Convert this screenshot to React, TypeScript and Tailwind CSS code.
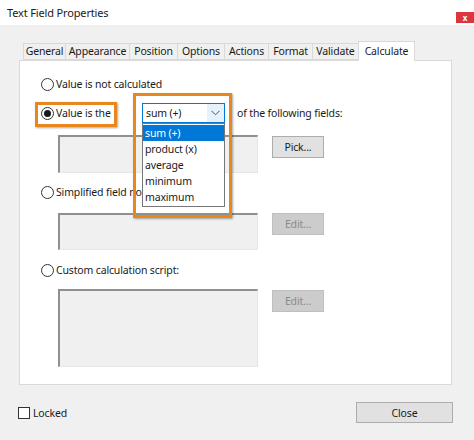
const tabs = [
  { label: "General", w: "w-[43px]" },
  { label: "Appearance", w: "w-[65px]" },
  { label: "Position", w: "w-[49px]" },
  { label: "Options", w: "w-[48px]" },
  { label: "Actions", w: "w-[45px]" },
  { label: "Format", w: "w-[45px]" },
  { label: "Validate", w: "w-[47px]" },
];

const options = ["sum (+)", "product (x)", "average", "minimum", "maximum"];

function Radio({ checked = false }: { checked?: boolean }) {
  return (
    <span className="w-[13px] h-[13px] rounded-full border border-[#333333] bg-white flex items-center justify-center shrink-0">
      {checked && <span className="w-[7px] h-[7px] rounded-full bg-[#1a1a1a]" />}
    </span>
  );
}

function Field({ h }: { h: string }) {
  return (
    <div
      className={`w-[200px] ${h} bg-[#f0f0f0] border-t-2 border-l-2 border-t-[#8f8f8f] border-l-[#8f8f8f] border-r border-b border-r-[#e6e6e6] border-b-[#e6e6e6]`}
    />
  );
}

function Btn({ label, disabled = false }: { label: string; disabled?: boolean }) {
  return (
    <div
      className={
        disabled
          ? "w-[52px] h-[22px] bg-[#cccccc] border border-[#bfbfbf] text-[#8a8a8a] flex items-center justify-center"
          : "w-[52px] h-[22px] bg-[#e1e1e1] border border-[#adadad] text-[#1a1a1a] flex items-center justify-center"
      }
    >
      {label}
    </div>
  );
}

export default function App() {
  return (
    <div
      className="relative w-[474px] h-[440px] bg-[#f0f0f0] overflow-hidden text-[10.5px] leading-[14px] tracking-[-0.15px] text-[#1a1a1a]"
      style={{ fontFamily: '"Noto Sans", "Open Sans", sans-serif' }}
    >
      {/* Title bar */}
      <div className="h-[25px] bg-white flex items-center pl-[7px] text-[11px]">
        Text Field Properties
      </div>
      <div className="absolute right-0 top-[12px] w-[18px] h-[11px] bg-[#d9363e] text-white text-[8px] leading-none flex items-center justify-center font-bold">
        x
      </div>

      {/* Tabs */}
      <div className="mt-[16px] ml-[23px] flex items-end h-[19px]">
        {tabs.map((t) => (
          <div
            key={t.label}
            className={`${t.w} h-[17px] bg-[#f0f0f0] border border-[#d9d9d9] -ml-px first:ml-0 flex items-center justify-center leading-none`}
          >
            {t.label}
          </div>
        ))}
        <div className="w-[57px] h-[20px] -mb-px bg-white border border-b-0 border-[#d9d9d9] -ml-px flex items-center justify-center leading-none relative z-10">
          Calculate
        </div>
      </div>

      {/* Panel */}
      <div className="ml-[19px] w-[433px] h-[325px] bg-white border border-[#d9d9d9] pl-[21px] pt-[13px] flex flex-col">
        <div className="h-[20px] flex items-center gap-[2px]">
          <Radio />
          <span>Value is not calculated</span>
        </div>

        <div className="mt-[9px] h-[20px] flex items-center">
          <div className="w-[101px] flex items-center gap-[2px]">
            <Radio checked />
            <span>Value is the</span>
          </div>
          <div className="w-[83px] h-[20px] border border-[#0078d7] bg-white flex items-center justify-between">
            <span className="pl-[3px]">sum (+)</span>
            <span className="w-[17px] h-full bg-[#e5f1fb] flex items-center justify-center">
              <svg width="9" height="6" viewBox="0 0 9 6" fill="none">
                <path d="M0.5 0.8 L4.5 4.8 L8.5 0.8" stroke="#555" strokeWidth="1" />
              </svg>
            </span>
          </div>
          <span className="ml-[12px]">of the following fields:</span>
        </div>

        <div className="mt-[12px] ml-[17px] flex items-start gap-[14px]">
          <Field h="h-[38px]" />
          <div className="mt-[1px]">
            <Btn label="Pick..." />
          </div>
        </div>

        <div className="mt-[9px] h-[20px] flex items-center gap-[2px]">
          <Radio />
          <span className="w-[86px] overflow-hidden whitespace-nowrap">Simplified field notation:</span>
        </div>

        <div className="mt-[11px] ml-[17px] flex items-start gap-[14px]">
          <Field h="h-[37px]" />
          <Btn label="Edit..." disabled />
        </div>

        <div className="mt-[10px] h-[20px] flex items-center gap-[2px]">
          <Radio />
          <span>Custom calculation script:</span>
        </div>

        <div className="mt-[9px] ml-[17px] flex items-start gap-[14px]">
          <Field h="h-[78px]" />
          <div className="mt-[1px]">
            <Btn label="Edit..." disabled />
          </div>
        </div>
      </div>

      {/* Bottom row */}
      <div className="mt-[17px] pl-[18px] pr-[21px] flex items-center justify-between">
        <div className="flex items-center gap-[3px]">
          <span className="w-[12px] h-[12px] border border-[#333333] bg-white" />
          <span>Locked</span>
        </div>
        <div className="w-[97px] h-[21px] bg-[#e1e1e1] border border-[#adadad] flex items-center justify-center">
          Close
        </div>
      </div>

      {/* Open dropdown list */}
      <div className="absolute left-[142px] top-[123px] w-[83px] h-[84px] bg-white border border-[#767676] z-20 flex flex-col pt-px">
        {options.map((o, i) => (
          <div
            key={o}
            className={
              i === 0
                ? "h-[16px] leading-[16px] pl-[2px] bg-[#0078d7] text-white"
                : "h-[16px] leading-[16px] pl-[2px]"
            }
          >
            {o}
          </div>
        ))}
      </div>

      {/* Orange highlight callouts */}
      <div className="absolute left-[35px] top-[102px] w-[82px] h-[25px] border-[3px] border-[#e8871e] z-30 shadow-[1px_1px_2px_rgba(0,0,0,0.35)]" />
      <div className="absolute left-[133px] top-[93px] w-[99px] h-[125px] border-[3px] border-[#e8871e] z-30 shadow-[1px_1px_2px_rgba(0,0,0,0.35)]" />
    </div>
  );
}
